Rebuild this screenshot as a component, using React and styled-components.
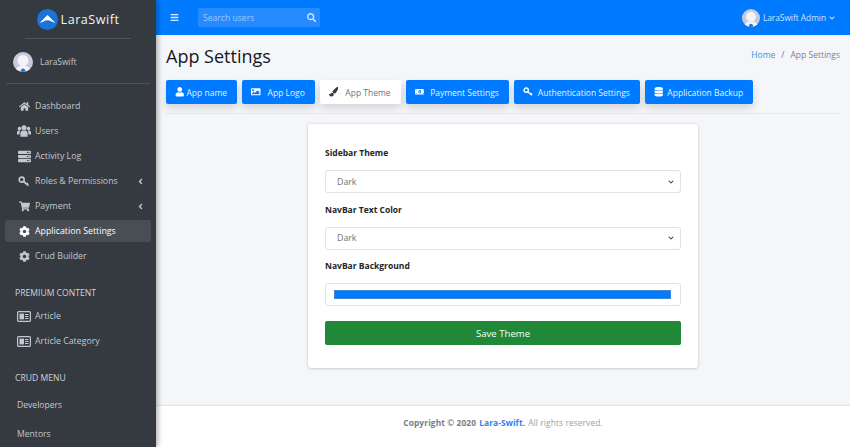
import React from 'react';
import styled, {createGlobalStyle} from 'styled-components';
import {
    FaHome, FaServer, FaShoppingCart, FaCog, FaAngleLeft, FaBars, FaSearch,
    FaChevronDown, FaUser, FaImage, FaPaintBrush, FaMoneyBillAlt, FaDatabase
} from 'react-icons/fa';

const GlobalStyle = createGlobalStyle`
    html, body {
        margin: 0;
        height: 100%;
        overflow: hidden;
    }
    body {
        font-family: "Open Sans", "Noto Sans", sans-serif;
        font-size: 9px;
        background: #f4f6f9;
    }
    * {
        box-sizing: border-box;
    }
`

const Page = styled.div`
    display: flex;
    width: 850px;
    height: 447px;
    overflow: hidden;
`

const Sidebar = styled.aside`
    width: 156px;
    flex-shrink: 0;
    background: #343a40;
    box-shadow: 2px 0 5px rgba(0,0,0,0.3);
    z-index: 2;
    color: #c2c7d0;
    overflow: hidden;
`

const Brand = styled.div`
    height: 39px;
    margin: 0 25px;
    padding-top: 9px;
    border-bottom: 1px solid #4b545c;
    display: flex;
    align-items: flex-start;
    justify-content: center;
    gap: 3px;
    color: #f2f4f6;
    font-size: 12.6px;
    letter-spacing: 0.5px;
    line-height: 21px;
`

const UserPanel = styled.div`
    height: 45px;
    margin: 0 6px;
    padding: 13px 0 0 7px;
    border-bottom: 1px solid #4b545c;
    display: flex;
    align-items: flex-start;
    gap: 7px;
    font-size: 8.5px;
    line-height: 20px;
`

const Nav = styled.nav`
    padding: 11px 5px 0;
`

const NavItem = styled.div`
    height: 22px;
    margin-bottom: 3px;
    padding: 0 7px 0 12px;
    display: flex;
    align-items: center;
    border-radius: 3px;
    font-size: 8.8px;
    background: ${({active}) => active ? 'rgba(255,255,255,0.1)' : 'transparent'};
    color: ${({active}) => active ? '#ffffff' : '#c2c7d0'};
`

const IconSlot = styled.span`
    width: 14px;
    margin-right: 4px;
    display: flex;
    justify-content: center;
    color: ${({active}) => active ? '#ffffff' : '#c2c7d0'};

    svg {
        height: ${({size}) => size || 11}px;
        width: auto;
    }
`

const Caret = styled.span`
    margin-left: auto;
    display: flex;

    svg {
        width: 7px;
        height: 9px;
    }
`

const NavHeader = styled.div`
    margin: ${({top}) => top}px 0 4px 10px;
    height: 15px;
    line-height: 15px;
    font-size: 8.6px;
    color: #d0d4db;
`

const PlainItem = styled.div`
    height: 29px;
    padding-left: 12px;
    display: flex;
    align-items: center;
    font-size: 8.6px;
    color: #c2c7d0;
`

const Main = styled.div`
    flex: 1;
    min-width: 0;
    display: flex;
    flex-direction: column;
`

const Navbar = styled.header`
    height: 35px;
    flex-shrink: 0;
    background: #007bff;
    display: flex;
    align-items: center;
    padding: 0 15px 0 14px;
    color: rgba(255,255,255,0.85);

    > svg {
        width: 9px;
        height: 9px;
    }
`

const Search = styled.div`
    width: 122px;
    height: 19px;
    margin-left: 19px;
    padding: 0 4px 0 5px;
    display: flex;
    align-items: center;
    justify-content: space-between;
    border-radius: 2px;
    background: #268bff;
    color: #99c9ff;
    font-size: 8.6px;

    svg {
        width: 9px;
        height: 9px;
        color: #cfe5ff;
    }
`

const Account = styled.div`
    margin-left: auto;
    display: flex;
    align-items: center;
    gap: 3px;
    font-size: 8.3px;
    color: #cfe5ff;

    > svg:last-child {
        width: 6px;
        height: 6px;
    }
`

const Content = styled.main`
    flex: 1;
    min-height: 0;
    padding: 0 10px;
    background: #f4f6f9;
`

const TitleRow = styled.div`
    height: 45px;
    padding-top: 8px;
    display: flex;
    justify-content: space-between;
    align-items: flex-start;
`

const Title = styled.h1`
    margin: 0;
    font-size: 18px;
    font-weight: 400;
    line-height: 27px;
    color: #14181c;
`

const Crumbs = styled.div`
    margin-top: 6px;
    font-size: 8.5px;
    line-height: 12px;
    color: #6c757d;
    display: flex;
    gap: 6px;
`

const Crumb = styled.span`
    color: ${({link}) => link ? '#3f90e8' : '#7c848b'};
`

const Tabs = styled.div`
    display: flex;
    gap: 5px;
    padding-bottom: 9px;
    border-bottom: 1px solid #e7e9ec;
`

const Tab = styled.div`
    height: 24px;
    padding: 0 10px 0 9px;
    display: flex;
    align-items: center;
    border-radius: 2px;
    font-size: 8.5px;
    white-space: nowrap;
    background: ${({active}) => active ? '#ffffff' : '#007bff'};
    color: ${({active}) => active ? '#6f757b' : '#e3f0ff'};
    box-shadow: 0 4px 8px rgba(0,0,0,0.14);
`

const TabIcon = styled.span`
    width: ${({slot}) => slot}px;
    display: flex;
    color: ${({active}) => active ? '#343a40' : '#ffffff'};

    svg {
        height: 9.5px;
        width: auto;
    }
`

const Card = styled.section`
    width: 390px;
    height: 244px;
    margin: 10px auto 0;
    padding: 22px 17px 0;
    background: #fff;
    border-radius: 3px;
    box-shadow: 0 0 3px rgba(0,0,0,0.14), 0 1px 3px rgba(0,0,0,0.1);
`

const Label = styled.div`
    height: 14px;
    line-height: 14px;
    margin-bottom: 10px;
    font-size: 8.5px;
    font-weight: 700;
    color: #212529;
`

const Select = styled.div`
    height: 23px;
    margin-bottom: 9.5px;
    padding: 0 6px 0 11px;
    display: flex;
    align-items: center;
    justify-content: space-between;
    border: 1px solid #dfe3e7;
    border-radius: 3px;
    font-size: 8.8px;
    color: #6b7279;

    svg {
        width: 6px;
        height: 6px;
        color: #444a50;
    }
`

const ColorField = styled.div`
    height: 23px;
    margin-bottom: 15px;
    padding: 6px 9px 6px 8px;
    border: 1px solid #dfe3e7;
    border-radius: 3px;
`

const Swatch = styled.div`
    height: 100%;
    background: #007bff;
    border: 1px solid #4a86cc;
`

const SaveButton = styled.div`
    height: 24px;
    display: flex;
    align-items: center;
    justify-content: center;
    border-radius: 2px;
    background: #218838;
    color: #f3fff5;
    font-size: 9.6px;
`

const Footer = styled.footer`
    height: 42px;
    flex-shrink: 0;
    padding-bottom: 8px;
    display: flex;
    align-items: center;
    justify-content: center;
    gap: 3px;
    background: #fff;
    border-top: 1px solid #dee2e6;
    font-size: 8.4px;
    color: #9aa1a8;
    letter-spacing: 0.1px;
`

const Strong = styled.b`
    color: ${({link}) => link ? '#1f83f2' : '#767d84'};
`

const Logo = () => (
    <svg width="21" height="21" viewBox="0 0 21 21">
        <circle cx="10.5" cy="10.5" r="10.5" fill="#1a73d9" />
        <path d="M2.5 14 L10.5 6 L18.5 14 L14.5 12.4 Q10.5 10.2 6.5 12.4 Z" fill="#ffffff" />
    </svg>
);

const Avatar = ({size}) => (
    <svg width={size} height={size} viewBox="0 0 20 20">
        <defs>
            <clipPath id={`avatar-${size}`}>
                <circle cx="10" cy="10" r="10" />
            </clipPath>
        </defs>
        <g clipPath={`url(#avatar-${size})`}>
            <rect width="20" height="20" fill="#c9c9dd" />
            <circle cx="10" cy="8.5" r="5.5" fill="#f4f4f8" />
            <path d="M2 20 Q3 13.5 10 13.5 Q17 13.5 18 20 Z" fill="#f4f4f8" />
            <path d="M7 20 Q8 16.5 10 16.5 Q12 16.5 13 20 Z" fill="#1a73d9" />
        </g>
    </svg>
);

const UsersIcon = () => (
    <svg viewBox="0 0 14 12" fill="currentColor">
        <circle cx="7" cy="2.8" r="2.5" />
        <path d="M3.4 11.8 V8.2 Q3.4 5.6 5.5 5.6 H8.5 Q10.6 5.6 10.6 8.2 V11.8 Z" />
        <circle cx="2.5" cy="3.6" r="1.8" />
        <circle cx="11.5" cy="3.6" r="1.8" />
        <path d="M0 9.4 V7.2 Q0 5.6 1.6 5.6 H3.2 Q2.6 6.6 2.6 8 V9.4 Z" />
        <path d="M14 9.4 V7.2 Q14 5.6 12.4 5.6 H10.8 Q11.4 6.6 11.4 8 V9.4 Z" />
    </svg>
);

const KeyIcon = () => (
    <svg viewBox="0 0 13 12" fill="none" stroke="currentColor">
        <circle cx="4" cy="4" r="2.7" strokeWidth="1.8" />
        <path d="M6 6 L11.5 10.5" strokeWidth="1.8" />
        <path d="M9.5 9 L10.8 7.6" strokeWidth="1.5" />
    </svg>
);

const ArticleIcon = () => (
    <svg viewBox="0 0 14 11" fill="currentColor">
        <rect x="0.6" y="0.6" width="12.8" height="9.8" rx="1" fill="none" stroke="currentColor" strokeWidth="1.2" />
        <rect x="2.5" y="2.6" width="4.5" height="5.8" />
        <path d="M8 3h3.5v1H8zM8 5h3.5v1H8zM8 7h3.5v1H8z" />
    </svg>
);

const menu = [
    {icon: FaHome, label: 'Dashboard'},
    {icon: UsersIcon, label: 'Users', size: 12},
    {icon: FaServer, label: 'Activity Log', size: 13},
    {icon: KeyIcon, label: 'Roles & Permissions', caret: true},
    {icon: FaShoppingCart, label: 'Payment', caret: true},
    {icon: FaCog, label: 'Application Settings', active: true},
    {icon: FaCog, label: 'Crud Builder'},
];

// slot = room from the start of the icon to the start of the label
const tabs = [
    {icon: FaUser, label: 'App name', slot: 11.5},
    {icon: FaImage, label: 'App Logo', slot: 16.5},
    {icon: FaPaintBrush, label: 'App Theme', slot: 16.5, active: true},
    {icon: FaMoneyBillAlt, label: 'Payment Settings', slot: 15.5},
    {icon: KeyIcon, label: 'Authentication Settings', slot: 15},
    {icon: FaDatabase, label: 'Application Backup', slot: 13.5},
];

const MenuRow = ({icon: Icon, label, caret, active, size}) => (
    <NavItem active={active}>
        <IconSlot active={active} size={size}><Icon /></IconSlot>
        {label}
        {caret && <Caret><FaAngleLeft /></Caret>}
    </NavItem>
);

export default function App() {
    return (
        <Page>
            <GlobalStyle />
            <Sidebar>
                <Brand><Logo />LaraSwift</Brand>
                <UserPanel><Avatar size={20} />LaraSwift</UserPanel>
                <Nav>
                    {menu.map(item => <MenuRow key={item.label} {...item} />)}
                    <NavHeader top={19}>PREMIUM CONTENT</NavHeader>
                    <MenuRow icon={ArticleIcon} label="Article" />
                    <MenuRow icon={ArticleIcon} label="Article Category" />
                    <NavHeader top={19}>CRUD MENU</NavHeader>
                    <PlainItem>Developers</PlainItem>
                    <PlainItem>Mentors</PlainItem>
                </Nav>
            </Sidebar>
            <Main>
                <Navbar>
                    <FaBars />
                    <Search>Search users<FaSearch /></Search>
                    <Account><Avatar size={18} />LaraSwift Admin<FaChevronDown /></Account>
                </Navbar>
                <Content>
                    <TitleRow>
                        <Title>App Settings</Title>
                        <Crumbs>
                            <Crumb link>Home</Crumb>
                            <span>/</span>
                            <Crumb>App Settings</Crumb>
                        </Crumbs>
                    </TitleRow>
                    <Tabs>
                        {tabs.map(({icon: Icon, label, active, slot}) => (
                            <Tab key={label} active={active}>
                                <TabIcon active={active} slot={slot}><Icon /></TabIcon>
                                {label}
                            </Tab>
                        ))}
                    </Tabs>
                    <Card>
                        <Label>Sidebar Theme</Label>
                        <Select>Dark<FaChevronDown /></Select>
                        <Label>NavBar Text Color</Label>
                        <Select>Dark<FaChevronDown /></Select>
                        <Label>NavBar Background</Label>
                        <ColorField><Swatch /></ColorField>
                        <SaveButton>Save Theme</SaveButton>
                    </Card>
                </Content>
                <Footer>
                    <Strong>Copyright © 2020</Strong>
                    <Strong link>Lara-Swift.</Strong>
                    All rights reserved.
                </Footer>
            </Main>
        </Page>
    );
}
